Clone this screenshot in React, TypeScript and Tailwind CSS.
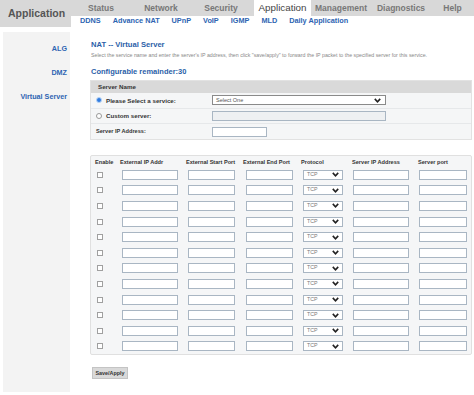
import React from 'react';

const tabs = ['Status', 'Network', 'Security', 'Application', 'Management', 'Diagnostics', 'Help'];
const subTabs = ['DDNS', 'Advance NAT', 'UPnP', 'VoIP', 'IGMP', 'MLD', 'Daily Application'];
const rows = Array.from({ length: 12 }, (_, i) => i);

function Chevron() {
  return (
    <svg width="7" height="5" viewBox="0 0 7 5" className="shrink-0">
      <path d="M0.8 0.9 L3.5 3.8 L6.2 0.9" fill="none" stroke="#222" strokeWidth="1.6" />
    </svg>
  );
}

function TextBox({ w, bg = 'bg-white' }: { w: string; bg?: string }) {
  return <div className={`${w} h-[10px] border border-[#a9b6c3] ${bg}`} />;
}

export default function App() {
  return (
    <div className="w-[474px] h-[395px] overflow-hidden bg-white font-['Liberation_Sans',Arial,sans-serif] text-[#333]">
      {/* Header */}
      <div className="flex h-[27px] bg-[#d8d8d8]">
        <div className="w-[71px] flex items-center pl-[8px] text-[10.5px] font-bold text-[#555]">Application</div>
        <div className="flex-1 flex flex-col">
          <div className="flex h-[16px]">
            {tabs.map((t) =>
              t === 'Application' ? (
                <div key={t} className="w-[57px] ml-[3px] bg-white flex items-center justify-center text-[9.8px] text-[#444]">
                  {t}
                </div>
              ) : (
                <div key={t} className={`${t === 'Help' ? 'w-[43px]' : 'w-[60px]'} flex items-center justify-center text-[8.5px] font-bold text-[#777]`}>
                  {t}
                </div>
              )
            )}
          </div>
          <div className="flex h-[11px] bg-white items-center pl-[9px] gap-[12px] text-[7.3px] font-bold text-[#2d64b2]">
            {subTabs.map((s) => (
              <span key={s}>{s}</span>
            ))}
          </div>
        </div>
      </div>

      {/* Body */}
      <div className="flex mt-[5px]">
        <div className="ml-[3px] w-[67px] h-[360px] bg-[#f3f3f3] pt-[5px] pr-[3px] flex flex-col items-end text-[7.2px] font-bold text-[#2d64b2]">
          <div className="h-[24px] leading-[24px]">ALG</div>
          <div className="h-[24px] leading-[24px]">DMZ</div>
          <div className="h-[24px] leading-[24px]">Virtual Server</div>
        </div>

        <div className="ml-[20px] w-[382px] flex flex-col">
          <div className="mt-[8px] h-[10px] leading-[10px] pl-[1px] text-[7.6px] font-bold text-[#2b5fa8]">NAT -- Virtual Server</div>
          <div className="mt-[1px] h-[8px] leading-[8px] pl-[1px] text-[5.25px] text-[#888] whitespace-nowrap">
            Select the service name and enter the server's IP address, then click "save/apply" to forward the IP packet to the specified server for this service.
          </div>
          <div className="mt-[8px] h-[10px] leading-[10px] pl-[1px] text-[7.5px] font-bold text-[#2b5fa8]">Configurable remainder:30</div>

          {/* Server name box */}
          <div className="mt-[3px] border border-[#e2e2e2] bg-[#f5f6f7]">
            <div className="h-[12px] bg-[#d9d9d9] flex items-center pl-[7px] text-[6.2px] font-bold text-[#333]">Server Name</div>
            <div className="h-[15.5px] flex items-center border-b border-[#e6e8ea]">
              <div className="w-[121px] flex items-center pl-[5px] gap-[4px]">
                <span className="w-[6px] h-[6px] rounded-full bg-[#2f7be0] border border-[#b8d4f5]" />
                <span className="text-[6.2px] font-bold">Please Select a service:</span>
              </div>
              <div className="w-[174px] h-[10px] border border-[#8a8a8a] bg-white flex items-center justify-between pl-[3px] pr-[4px]">
                <span className="text-[5.5px] text-[#555]">Select One</span>
                <Chevron />
              </div>
            </div>
            <div className="h-[15.5px] flex items-center border-b border-[#e6e8ea]">
              <div className="w-[121px] flex items-center pl-[5px] gap-[4px]">
                <span className="w-[6px] h-[6px] rounded-full bg-white border border-[#9a9a9a]" />
                <span className="text-[6.2px] font-bold">Custom server:</span>
              </div>
              <TextBox w="w-[174px]" bg="bg-[#eef0f2]" />
            </div>
            <div className="h-[15px] flex items-center">
              <div className="w-[121px] pl-[5px] text-[5.6px] font-bold">Server IP Address:</div>
              <TextBox w="w-[55px]" />
            </div>
          </div>

          {/* Virtual server table */}
          <div className="mt-[15px] border border-[#e0e0e0] rounded-[2px] bg-[#f5f6f7]">
            <div className="h-[11px] flex items-center pt-[2px] text-[5.6px] font-bold text-[#333] whitespace-nowrap">
              <div className="w-[28px] pl-[4px]">Enable</div>
              <div className="w-[66px] pl-[1px]">External IP Addr</div>
              <div className="w-[57px] pl-[1px]">External Start Port</div>
              <div className="w-[57px] pl-[1px]">External End Port</div>
              <div className="w-[51px] pl-[2px]">Protocol</div>
              <div className="w-[66px] pl-[2px]">Server IP Address</div>
              <div className="w-[55px] pl-[2px]">Server port</div>
            </div>
            {rows.map((r) => (
              <div key={r} className="h-[15.6px] flex items-center">
                <div className="w-[28px] pl-[6px]">
                  <div className="w-[6px] h-[6px] border border-[#a0a0a0] bg-white" />
                </div>
                <div className="w-[66px] pl-[3px]">
                  <TextBox w="w-[56px]" />
                </div>
                <div className="w-[57px] pl-[3px]">
                  <TextBox w="w-[47px]" />
                </div>
                <div className="w-[57px] pl-[4px]">
                  <TextBox w="w-[47px]" />
                </div>
                <div className="w-[51px] pl-[4px]">
                  <div className="w-[40px] h-[10px] border border-[#a9b6c3] bg-white flex items-center justify-between pl-[3px] pr-[3px]">
                    <span className="text-[5.3px] text-[#777]">TCP</span>
                    <Chevron />
                  </div>
                </div>
                <div className="w-[66px] pl-[3px]">
                  <TextBox w="w-[56px]" />
                </div>
                <div className="w-[55px] pl-[3px]">
                  <TextBox w="w-[48px]" />
                </div>
              </div>
            ))}
          </div>

          <div className="mt-[12px] ml-[2px]">
            <button className="w-[36px] h-[12px] bg-[#d9d9d9] border border-[#c4c4c4] text-[5.4px] font-bold text-[#333] flex items-center justify-center">
              Save/Apply
            </button>
          </div>
        </div>
      </div>
    </div>
  );
}
